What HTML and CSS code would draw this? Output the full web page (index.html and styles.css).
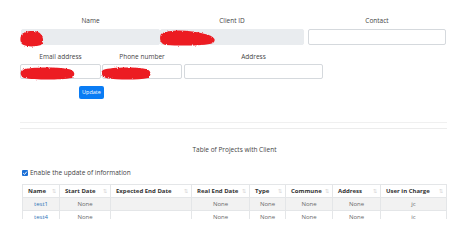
FILE: index.html
```html
<!DOCTYPE html>
<html>
<head>
<meta charset="utf-8">
<link rel="stylesheet" href="styles.css">
</head>
<body>
<div class="page">
  <div class="row row1">
    <div class="field w-name">
      <label>Name</label>
      <div class="input readonly"></div>
    </div>
    <div class="field w-client">
      <label>Client ID</label>
      <div class="input readonly"></div>
    </div>
    <div class="field w-contact gap4">
      <label>Contact</label>
      <div class="input"></div>
    </div>
  </div>
  <div class="row row2">
    <div class="field w-email">
      <label>Email address</label>
      <div class="input"></div>
    </div>
    <div class="field w-phone gap1">
      <label>Phone number</label>
      <div class="input"></div>
    </div>
    <div class="field w-address gap2">
      <label>Address</label>
      <div class="input"></div>
    </div>
  </div>
  <div class="btn-wrap">
    <button class="btn">Update</button>
  </div>
  <div class="divider"></div>
  <div class="title">Table of Projects with Client</div>
  <div class="check-row">
    <span class="checkbox"><svg viewBox="0 0 6 6" width="6" height="6"><path d="M1.2 3.1 L2.5 4.4 L4.9 1.6" fill="none" stroke="#fff" stroke-width="1"/></svg></span>
    <span>Enable the update of information</span>
  </div>
  <table class="grid">
    <colgroup>
      <col style="width:37px"><col style="width:51px"><col style="width:81px"><col style="width:58px">
      <col style="width:36px"><col style="width:47px"><col style="width:48px"><col style="width:66px">
    </colgroup>
    <thead>
      <tr>
        <th><div class="th"><span>Name</span><span class="sort">⇅</span></div></th>
        <th><div class="th"><span>Start Date</span><span class="sort">⇅</span></div></th>
        <th><div class="th"><span>Expected End Date</span><span class="sort">⇅</span></div></th>
        <th><div class="th"><span>Real End Date</span><span class="sort">⇅</span></div></th>
        <th><div class="th"><span>Type</span><span class="sort">⇅</span></div></th>
        <th><div class="th"><span>Commune</span><span class="sort">⇅</span></div></th>
        <th><div class="th"><span>Address</span><span class="sort">⇅</span></div></th>
        <th><div class="th"><span>User in Charge</span><span class="sort">⇅</span></div></th>
      </tr>
    </thead>
    <tbody>
      <tr class="odd">
        <td><a class="link">test1</a></td><td>None</td><td></td><td>None</td><td>None</td><td>None</td><td>None</td><td>jc</td>
      </tr>
      <tr>
        <td><a class="link">test4</a></td><td>None</td><td></td><td>None</td><td>None</td><td>None</td><td>None</td><td>jc</td>
      </tr>
    </tbody>
  </table>
</div>
<svg class="scribbles" width="474" height="219" viewBox="0 0 474 219">
  <defs>
    <filter id="rough" filterUnits="userSpaceOnUse" x="0" y="0" width="474" height="219">
      <feTurbulence type="fractalNoise" baseFrequency="0.8" numOctaves="2" seed="3" result="n"/>
      <feDisplacementMap in="SourceGraphic" in2="n" scale="2.5" xChannelSelector="R" yChannelSelector="G"/>
    </filter>
  </defs>
  <g fill="#ec1c24" filter="url(#rough)">
    <path d="M21 36 C22 31 33 30 38 32 C43 34 45 42 41 45 C36 47 25 47 22 44 C20 42 20 38 21 36 Z"/>
    <path d="M161 34 C170 29 190 30 205 34 C214 36 217 40 213 43 C205 46 180 46 166 45 C160 44 159 38 161 34 Z"/>
    <path d="M22 70 C30 67 55 67 68 69 C75 70 76 75 72 78 C60 80 35 80 24 78 C20 76 20 72 22 70 Z"/>
    <path d="M103 70 C112 67 135 67 146 69 C151 70 152 75 148 78 C138 80 118 80 106 78 C101 76 101 72 103 70 Z"/>
  </g>
</svg>
</body>
</html>
```

FILE: styles.css
```css
html, body {
  margin: 0;
  padding: 0;
  background: #fff;
}
body {
  font-family: "Open Sans", "Noto Sans", sans-serif;
  color: #444;
  width: 474px;
  height: 219px;
  overflow: hidden;
  position: relative;
}
.page {
  padding: 16px 0 0 21px;
}
.row {
  display: flex;
}
.field {
  display: flex;
  flex-direction: column;
  align-items: center;
}
.field label {
  font-size: 6.5px;
  line-height: 10px;
  height: 10px;
  color: #444;
}
.row1 .field label { margin-bottom: 3px; }
.row2 { margin-top: 7px; margin-left: -1px; }
.row2 .field label { margin-bottom: 2px; }
.input {
  box-sizing: border-box;
  width: 100%;
  height: 16px;
  border: 1px solid #d5d9dd;
  border-radius: 2px;
  background: #fff;
}
.row2 .input { height: 15px; }
.input.readonly {
  background: #e9ecef;
  border-color: #e9ecef;
}
.w-name { width: 139px; }
.w-client { width: 144px; }
.w-contact { width: 138px; }
.gap4 { margin-left: 4px; }
.w-email { width: 81px; }
.w-phone { width: 80px; }
.w-address { width: 139px; }
.gap1 { margin-left: 1px; }
.gap2 { margin-left: 2px; }
.btn-wrap {
  width: 141px;
  margin-top: 7px;
  display: flex;
  justify-content: center;
}
.btn {
  box-sizing: border-box;
  width: 25px;
  height: 13px;
  padding: 0;
  border: none;
  border-radius: 2px;
  background: #0a7cf4;
  color: #fff;
  font-family: inherit;
  font-size: 5.5px;
  line-height: 13px;
}
.divider {
  width: 427px;
  margin-left: -1px;
  margin-top: 23px;
  height: 5px;
  border-top: 1px solid #f0f0f0;
  border-bottom: 1px solid #ececec;
}
.title {
  width: 427px;
  margin-top: 16px;
  text-align: center;
  font-size: 6.5px;
  line-height: 10px;
  color: #444;
}
.check-row {
  margin-top: 13px;
  display: flex;
  align-items: center;
  gap: 2px;
  font-size: 6.5px;
  line-height: 10px;
  color: #444;
  margin-left: 1px;
}
.checkbox {
  width: 6px;
  height: 6px;
  background: #1a6fd6;
  border-radius: 1px;
  display: inline-flex;
}
.grid {
  margin-top: 6px;
  margin-left: 1px;
  border-collapse: collapse;
  table-layout: fixed;
  width: 424px;
  font-size: 6px;
}
.grid th, .grid td {
  border: 1px solid #e4e6e8;
  padding: 0;
  white-space: nowrap;
  overflow: hidden;
}
.grid th {
  height: 12px;
  font-weight: 700;
  color: #333;
  text-align: left;
}
.th {
  display: flex;
  justify-content: space-between;
  align-items: center;
  padding: 0 3px 0 5px;
  line-height: 11px;
}
.sort {
  color: #d4d4d4;
  font-size: 5px;
  font-weight: 400;
}
.grid td {
  height: 12px;
  text-align: center;
  color: #6a6a6a;
  line-height: 12px;
}
.grid tr.odd td {
  background: #f2f2f2;
}
.link {
  color: #2f73b8;
}
.scribbles {
  position: absolute;
  left: 0;
  top: 0;
  pointer-events: none;
}
```
